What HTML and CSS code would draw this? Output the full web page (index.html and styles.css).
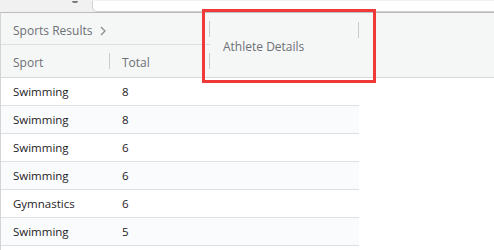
FILE: index.html
```html
<!DOCTYPE html>
<html lang="en">
<head>
    <meta charset="UTF-8">
    <title>Sports Results</title>
    <link rel="stylesheet" href="styles.css">
</head>
<body>
    <div class="chrome">
        <div class="chrome-icon"></div>
        <div class="address"></div>
    </div>

    <div class="grid">
        <div class="grid-header">
            <div class="hcell group-cell sep">
                Sports Results
                <svg class="chevron" width="6" height="10" viewBox="0 0 6 10">
                    <path d="M1 1 L5 5 L1 9" fill="none" stroke="#8a8d91" stroke-width="1.3"/>
                </svg>
            </div>
            <div class="hcell athlete-cell sep sep-top">Athlete Details</div>
            <div class="hcell sport-cell sep">Sport</div>
            <div class="hcell total-cell sep">Total</div>
        </div>

        <div class="grid-body" id="gridBody"></div>

        <div class="highlight"></div>
    </div>

    <script>
        // rows shown in the grid
        const rows = [
            ['Swimming', 8],
            ['Swimming', 8],
            ['Swimming', 6],
            ['Swimming', 6],
            ['Gymnastics', 6],
            ['Swimming', 5]
        ];

        const body = document.getElementById('gridBody');
        rows.forEach((r, i) => {
            const row = document.createElement('div');
            row.className = 'row' + (i % 2 ? ' row-odd' : '');
            row.innerHTML = `<div class="cell">${r[0]}</div><div class="cell">${r[1]}</div><div class="cell"></div>`;
            body.appendChild(row);
        });
    </script>
</body>
</html>
```

FILE: styles.css
```css
body {
    margin: 0;
    font-family: "Open Sans", "Noto Sans", sans-serif;
    font-size: 11.5px;
    background-color: #ffffff;
    overflow: hidden;
}
.chrome {
    height: 12px;
    background-color: #f1f1f1;
    display: flex;
    align-items: flex-end;
}
.chrome-icon {
    width: 6px;
    height: 2px;
    margin-left: 72px;
    margin-bottom: 9px;
    background-color: #7a7a7a;
    border-radius: 0 0 3px 3px;
}
.address {
    height: 11px;
    flex: 1;
    margin-left: 14px;
    background-color: #ffffff;
    border: 1px solid #cfcfcf;
    border-top: none;
    border-right: none;
    border-radius: 0 0 0 5px;
    box-sizing: border-box;
}
.grid {
    position: relative;
    border-top: 1px solid #bdbdbd;
    border-left: 1px solid #d4d4d4;
    height: 237px;
}
.grid-header {
    display: grid;
    grid-template-columns: 109px 100px 149px 1fr;
    grid-template-rows: 32px 32px;
    background-color: #f5f7f7;
    border-bottom: 1px solid #d6d9dc;
    color: #6d7075;
    font-size: 12px;
}
.hcell {
    position: relative;
    display: flex;
    align-items: center;
    padding-left: 12px;
    padding-top: 2px;
    box-sizing: border-box;
}
.group-cell {
    grid-column: 1 / 3;
    grid-row: 1;
    border-bottom: 1px solid #dcdfe2;
    gap: 8px;
    padding-top: 4px;
}
.athlete-cell {
    grid-column: 3;
    grid-row: 1 / 3;
    padding-left: 13px;
    padding-top: 3px;
}
.sport-cell {
    grid-column: 1;
    grid-row: 2;
}
.total-cell {
    grid-column: 2;
    grid-row: 2;
}
.sep::after {
    content: "";
    position: absolute;
    right: 0;
    top: 8px;
    width: 1px;
    height: 16px;
    background-color: #c8cbd0;
}
.sep-top::after {
    top: 9px;
}
.chevron {
    margin-top: 1px;
}
.row {
    display: grid;
    grid-template-columns: 109px 100px 149px;
    width: 358px;
    height: 27px;
    border-bottom: 1px solid #dde1e6;
    color: #1e2226;
}
.row-odd {
    background-color: #fafbfd;
}
.cell {
    display: flex;
    align-items: center;
    padding-left: 12px;
}
.highlight {
    position: absolute;
    left: 201px;
    top: -4px;
    width: 174px;
    height: 74px;
    border: 3px solid #f03a3a;
    box-sizing: border-box;
}
```
